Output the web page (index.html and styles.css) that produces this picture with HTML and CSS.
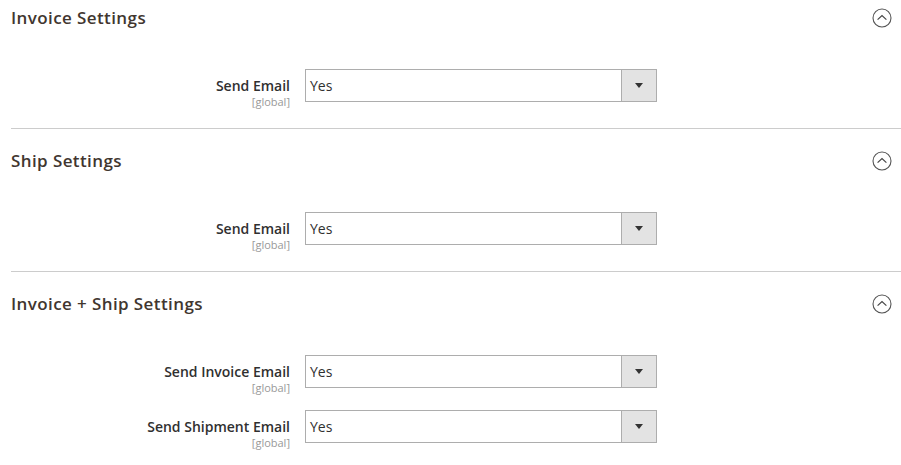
FILE: index.html
```html
<!DOCTYPE html>
<html lang="en">
<head>
    <meta charset="UTF-8">
    <title>Sales Emails Settings</title>
    <link rel="stylesheet" href="styles.css">
</head>
<body>
    <div class="config">
        <div class="section first">
            <div class="section-head">
                <span class="section-title">Invoice Settings</span>
                <span class="toggle">
                    <svg width="20" height="20" viewBox="0 0 20 20"><circle cx="10" cy="10" r="9" fill="none" stroke="#555" stroke-width="1.1"/><path d="M5.6 11.6 L10 7.6 L14.4 11.6" fill="none" stroke="#444" stroke-width="1.2"/></svg>
                </span>
            </div>
            <div class="rows">
                <div class="row">
                    <div class="label">Send Email<span class="scope">[global]</span></div>
                    <div class="select"><span class="value">Yes</span><span class="arrow"></span></div>
                </div>
            </div>
        </div>

        <div class="section">
            <div class="section-head">
                <span class="section-title">Ship Settings</span>
                <span class="toggle">
                    <svg width="20" height="20" viewBox="0 0 20 20"><circle cx="10" cy="10" r="9" fill="none" stroke="#555" stroke-width="1.1"/><path d="M5.6 11.6 L10 7.6 L14.4 11.6" fill="none" stroke="#444" stroke-width="1.2"/></svg>
                </span>
            </div>
            <div class="rows">
                <div class="row">
                    <div class="label">Send Email<span class="scope">[global]</span></div>
                    <div class="select"><span class="value">Yes</span><span class="arrow"></span></div>
                </div>
            </div>
        </div>

        <div class="section">
            <div class="section-head">
                <span class="section-title">Invoice + Ship Settings</span>
                <span class="toggle">
                    <svg width="20" height="20" viewBox="0 0 20 20"><circle cx="10" cy="10" r="9" fill="none" stroke="#555" stroke-width="1.1"/><path d="M5.6 11.6 L10 7.6 L14.4 11.6" fill="none" stroke="#444" stroke-width="1.2"/></svg>
                </span>
            </div>
            <div class="rows">
                <div class="row">
                    <div class="label">Send Invoice Email<span class="scope">[global]</span></div>
                    <div class="select"><span class="value">Yes</span><span class="arrow"></span></div>
                </div>
                <div class="row">
                    <div class="label">Send Shipment Email<span class="scope">[global]</span></div>
                    <div class="select"><span class="value">Yes</span><span class="arrow"></span></div>
                </div>
            </div>
        </div>
    </div>
</body>
</html>
```

FILE: styles.css
```css
* {
    box-sizing: border-box;
}

body {
    margin: 0;
    font-family: 'Open Sans', 'Liberation Sans', sans-serif;
    background: #fff;
    color: #303030;
    overflow: hidden;
}

.config {
    margin-left: 11px;
    width: 910px;
}

.section {
    border-top: 1px solid #cccccc;
    padding: 14px 0 26px;
}

.section.first {
    border-top: none;
    padding-top: 0;
}

.section-head {
    display: flex;
    align-items: center;
    justify-content: space-between;
    height: 34px;
    width: 881px;
}

.section-title {
    font-size: 17px;
    font-weight: 600;
    color: #41362f;
    letter-spacing: 0.4px;
}

.toggle {
    display: flex;
    width: 20px;
    height: 20px;
    margin-top: 1px;
}

.rows {
    display: flex;
    flex-direction: column;
    gap: 22px;
    margin-top: 35px;
}

.row {
    display: flex;
    align-items: flex-start;
    gap: 15px;
    height: 33px;
}

.label {
    width: 279px;
    text-align: right;
    padding-top: 7px;
    font-size: 14px;
    font-weight: 600;
    line-height: 19px;
    color: #303030;
}

.scope {
    display: block;
    font-size: 11px;
    font-weight: 400;
    line-height: 14px;
    color: #999999;
}

.select {
    display: flex;
    width: 352px;
    height: 33px;
    border: 1px solid #adadad;
    background: #fff;
}

.value {
    flex: 1;
    padding-left: 4px;
    font-size: 14px;
    line-height: 31px;
    color: #303030;
}

.arrow {
    position: relative;
    width: 35px;
    border-left: 1px solid #adadad;
    background: #e3e3e3;
}

.arrow::after {
    content: "";
    position: absolute;
    left: 13px;
    top: 13px;
    border-left: 4.5px solid transparent;
    border-right: 4.5px solid transparent;
    border-top: 5px solid #333;
}
```
